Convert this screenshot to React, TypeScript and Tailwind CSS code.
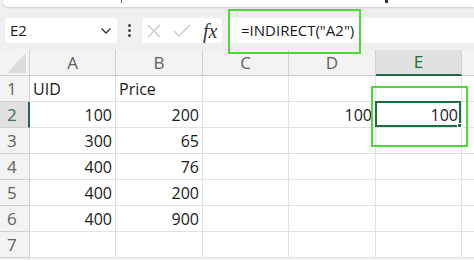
const cols = ["A", "B", "C", "D", "E"];

const rows: (string | number)[][] = [
  ["UID", "Price", "", "", ""],
  [100, 200, "", 100, 100],
  [300, 65, "", "", ""],
  [400, 76, "", "", ""],
  [400, 200, "", "", ""],
  [400, 900, "", "", ""],
  ["", "", "", "", ""],
];

const Cell = ({ value, selected }: { value: string | number; selected?: boolean }) => (
  <div
    className={
      "h-[26px] border-r border-b border-[#e1e1e1] bg-white flex items-center px-[3px] leading-none " +
      (typeof value === "number" ? "justify-end " : "justify-start ") +
      (selected ? "relative" : "")
    }
  >
    <span className="pt-[1px]">{value}</span>
    {selected && (
      <div className="absolute -left-[1px] -top-[1px] -right-[0px] -bottom-[0px] border-2 border-[#1e6c41]">
        <div className="absolute -right-[3px] -bottom-[3px] w-[5px] h-[5px] bg-[#1e6c41] border border-white" />
      </div>
    )}
  </div>
);

const App = () => {
  return (
    <div
      className="relative w-[474px] h-[260px] overflow-hidden bg-[#f0f0f0] text-[#1a1a1a]"
      style={{ fontFamily: '"Open Sans", "Noto Sans", sans-serif' }}
    >
      {/* ribbon edge */}
      <div className="relative ml-[3px] h-[7px] bg-white rounded-bl-[6px] shadow-[0_1px_2px_rgba(0,0,0,0.15)]">
        <div className="absolute left-[118px] top-0 w-[1px] h-[3px] bg-[#555]" />
        <div className="absolute left-[382px] top-0 w-[3px] h-[3px] bg-[#333]" />
      </div>

      {/* formula bar */}
      <div className="flex items-center h-[25px] mt-[11px]">
        <div className="ml-[5px] w-[112px] h-[25px] bg-white rounded-[4px] flex items-center justify-between pl-[5px] pr-[5px] text-[15px]">
          <span>E2</span>
          <svg width="12" height="8" viewBox="0 0 12 8">
            <path d="M1.5 1.5 L6 6 L10.5 1.5" fill="none" stroke="#333" strokeWidth="1.3" />
          </svg>
        </div>
        <div className="w-[25px] flex flex-col items-center gap-[2px]">
          <div className="w-[3px] h-[3px] rounded-full bg-[#444]" />
          <div className="w-[3px] h-[3px] rounded-full bg-[#444]" />
          <div className="w-[3px] h-[3px] rounded-full bg-[#444]" />
        </div>
        <div className="w-[80px] h-[25px] bg-white rounded-[4px] flex items-center pl-[5px]">
          <svg width="14" height="14" viewBox="0 0 14 14">
            <path d="M1 1 L13 13 M13 1 L1 13" stroke="#c4c4c4" strokeWidth="1.2" />
          </svg>
          <svg width="18" height="14" viewBox="0 0 18 14" className="ml-[12px]">
            <path d="M1 7 L6 12 L17 1" fill="none" stroke="#c4c4c4" strokeWidth="1.2" />
          </svg>
          <span
            className="ml-[12px] italic text-[20px] text-[#333] leading-none"
            style={{ fontFamily: '"Liberation Serif", "DejaVu Serif", serif' }}
          >
            fx
          </span>
        </div>
        <div className="ml-[6px] flex-1 h-[25px] bg-white rounded-l-[4px] flex items-center pl-[13px] text-[15px]">
          =INDIRECT("A2")
        </div>
      </div>

      {/* sheet grid */}
      <div className="mt-[7px] grid grid-cols-[30px_86px_87px_86px_87px_86px_1fr] text-[16px]">
        <div className="h-[26px] bg-[#f3f3f3] border-r border-b border-[#d0d0d0] flex items-end justify-end pr-[2px] pb-[2px]">
          <svg width="20" height="20" viewBox="0 0 20 20">
            <path d="M19 0 L19 20 L0 20 Z" fill="#dcdcdc" />
          </svg>
        </div>
        {cols.map((c) => (
          <div
            key={c}
            className={
              "h-[26px] flex items-center justify-center text-[17px] border-r " +
              (c === "E"
                ? "bg-[#e1e1e1] text-[#1e6c41] border-b-2 border-b-[#1e6c41] border-r-[#d0d0d0]"
                : "bg-[#f3f3f3] text-[#616161] border-b border-[#d0d0d0]")
            }
          >
            {c}
          </div>
        ))}
        <div className="h-[26px] bg-[#f3f3f3] border-b border-[#d0d0d0]" />

        {rows.map((r, i) => (
          <div key={i} className="contents">
            <div
              className={
                "h-[26px] flex items-center pl-[7px] text-[17px] border-b " +
                (i === 1
                  ? "bg-[#e1e1e1] text-[#3d6b52] border-r-2 border-r-[#1e6c41] border-b-[#d0d0d0]"
                  : "bg-[#f3f3f3] text-[#616161] border-r border-[#d0d0d0]")
              }
            >
              {i + 1}
            </div>
            {r.map((v, j) => (
              <Cell key={j} value={v} selected={i === 1 && j === 4} />
            ))}
            <div className="h-[26px] bg-white border-b border-[#e1e1e1]" />
          </div>
        ))}
      </div>

      {/* callout highlights */}
      <div className="absolute left-[228px] top-[9px] w-[133px] h-[45px] border-2 border-[#4cd937]" />
      <div className="absolute left-[371px] top-[86px] w-[97px] h-[61px] border-[2.5px] border-[#4cd937]" />
    </div>
  );
};

export default App;
